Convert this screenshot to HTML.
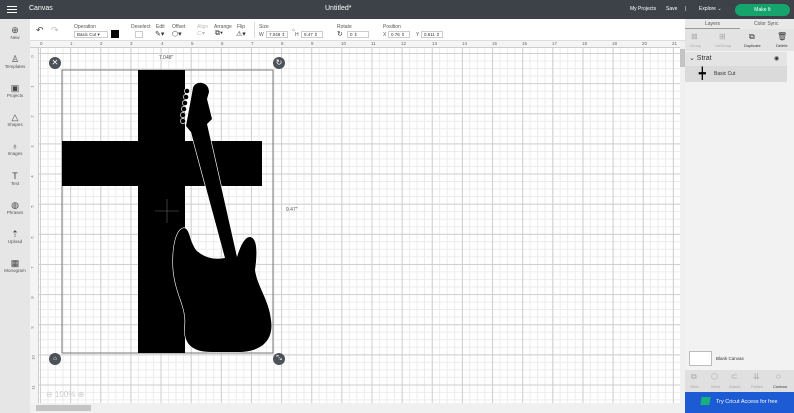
<!DOCTYPE html>
<html><head><style>
*{margin:0;padding:0;box-sizing:border-box}
body{width:794px;height:413px;overflow:hidden;font-family:"Liberation Sans",sans-serif;background:#fff;position:relative;color:#333}
.a{position:absolute}
.top{left:0;top:0;width:794px;height:19px;background:#3d4248;color:#fff}
.tb{left:30px;top:19px;width:655px;height:22px;background:#fff;border-bottom:1px solid #ddd}
.lbl{font-size:5px;color:#555}
.side{left:0;top:19px;width:30px;height:394px;background:#e6e6e6}
.si{position:absolute;left:0;width:30px;text-align:center;font-size:4.5px;color:#555}
.si b{display:block;font-size:9px;font-weight:normal;color:#444;line-height:10px}
.canvas{left:39px;top:48px;width:641px;height:355px;background-color:#fff;
background-image:linear-gradient(to right,#cfcfcf 1px,transparent 1px),linear-gradient(to bottom,#cfcfcf 1px,transparent 1px),linear-gradient(to right,#ebebeb 1px,transparent 1px),linear-gradient(to bottom,#ebebeb 1px,transparent 1px);
background-size:30.15px 30.15px,30.15px 30.15px,7.54px 7.54px,7.54px 7.54px;background-position:1px 5px,1px 5px,1px 5px,1px 5px}
.rt{left:30px;top:41px;width:650px;height:7px;background:#f4f4f4;border-bottom:1px solid #ccc;font-size:4.5px;color:#666}
.rl{left:30px;top:48px;width:9px;height:355px;background:#f4f4f4;border-right:1px solid #ccc;font-size:4px;color:#666}
.rl span{position:absolute;left:1px;transform:rotate(-90deg)}
.btn{width:12px;height:12px;border-radius:50%;background:#4d5258;color:#fff;font-size:8px;text-align:center;line-height:12px}
.rp{left:685px;top:19px;width:109px;height:394px;background:#f2f2f2}
.inp{position:absolute;height:7px;border:1px solid #ccc;font-size:4.5px;line-height:5px;padding-left:2px;background:#fff}
</style></head><body>
<div class="a top">
 <div class="a" style="left:7px;top:6px;width:10px;height:1px;background:#fff;box-shadow:0 3px #fff,0 6px #fff"></div>
 <div class="a" style="left:29px;top:5px;font-size:7px">Canvas</div>
 <div class="a" style="left:325px;top:5px;font-size:7px">Untitled*</div>
 <div class="a" style="left:630px;top:6px;font-size:5px">My Projects</div>
 <div class="a" style="left:666px;top:6px;font-size:5px">Save</div>
 <div class="a" style="left:685px;top:6px;font-size:5px">|</div>
 <div class="a" style="left:699px;top:6px;font-size:5px">Explore ⌄</div>
 <div class="a" style="left:735px;top:4px;width:55px;height:12px;border-radius:6px;background:#14a46c;font-size:5px;text-align:center;line-height:12px">Make It</div>
</div>
<div class="a side">
 <div class="si" style="top:6px"><b>⊕</b>New</div>
 <div class="si" style="top:35px"><b>♙</b>Templates</div>
 <div class="si" style="top:64px"><b>▣</b>Projects</div>
 <div class="si" style="top:93px"><b>△</b>Shapes</div>
 <div class="si" style="top:122px"><b>♁</b>Images</div>
 <div class="si" style="top:152px"><b>T</b>Text</div>
 <div class="si" style="top:181px"><b>◍</b>Phrases</div>
 <div class="si" style="top:210px"><b>⇡</b>Upload</div>
 <div class="si" style="top:239px"><b>▦</b>Monogram</div>
</div>
<div class="a tb">
 <div class="a" style="left:6px;top:6px;font-size:9px;color:#444">↶</div>
 <div class="a" style="left:21px;top:6px;font-size:9px;color:#bbb">↷</div>
 <div class="a lbl" style="left:44px;top:5px">Operation</div>
 <div class="inp" style="left:44px;top:12px;width:34px">Basic Cut ▾</div>
 <div class="a" style="left:81px;top:11px;width:8px;height:8px;background:#000"></div>
 <div class="a lbl" style="left:101px;top:5px">Deselect</div>
 <div class="inp" style="left:105px;top:12px;width:8px"></div>
 <div class="a lbl" style="left:126px;top:5px">Edit</div>
 <div class="a" style="left:125px;top:11px;font-size:7px">✎▾</div>
 <div class="a lbl" style="left:142px;top:5px">Offset</div>
 <div class="a" style="left:142px;top:11px;font-size:7px">⬡▾</div>
 <div class="a lbl" style="left:167px;top:5px;color:#bbb">Align</div>
 <div class="a" style="left:167px;top:11px;font-size:6px;color:#bbb">⊏▾</div>
 <div class="a lbl" style="left:184px;top:5px">Arrange</div>
 <div class="a" style="left:185px;top:11px;font-size:7px">⧉▾</div>
 <div class="a lbl" style="left:207px;top:5px">Flip</div>
 <div class="a" style="left:206px;top:11px;font-size:7px">⚠▾</div>
 <div class="a" style="left:224px;top:3px;width:1px;height:16px;background:#ddd"></div>
 <div class="a lbl" style="left:229px;top:5px">Size</div>
 <div class="a lbl" style="left:229px;top:13px">W</div>
 <div class="inp" style="left:236px;top:12px;width:22px">7.048 ⇕</div>
 <div class="a lbl" style="left:262px;top:8px">⌂</div>
 <div class="a lbl" style="left:265px;top:13px">H</div>
 <div class="inp" style="left:271px;top:12px;width:22px">9.47 ⇕</div>
 <div class="a lbl" style="left:307px;top:5px">Rotate</div>
 <div class="a" style="left:307px;top:11px;font-size:7px">↻</div>
 <div class="inp" style="left:317px;top:12px;width:22px">0 ⇕</div>
 <div class="a lbl" style="left:353px;top:5px">Position</div>
 <div class="a lbl" style="left:353px;top:13px">X</div>
 <div class="inp" style="left:358px;top:12px;width:22px">0.76 ⇕</div>
 <div class="a lbl" style="left:386px;top:13px">Y</div>
 <div class="inp" style="left:391px;top:12px;width:22px">0.611 ⇕</div>
</div>
<div class="a canvas"></div>
<div class="a rt">
 <span class="a" style="left:10px">0</span><span class="a" style="left:40px">1</span><span class="a" style="left:70px">2</span><span class="a" style="left:100px">3</span><span class="a" style="left:131px">4</span><span class="a" style="left:161px">5</span><span class="a" style="left:191px">6</span><span class="a" style="left:221px">7</span><span class="a" style="left:251px">8</span><span class="a" style="left:281px">9</span><span class="a" style="left:311px">10</span><span class="a" style="left:341px">11</span><span class="a" style="left:371px">12</span><span class="a" style="left:402px">13</span><span class="a" style="left:432px">14</span><span class="a" style="left:462px">15</span><span class="a" style="left:492px">16</span><span class="a" style="left:522px">17</span><span class="a" style="left:552px">18</span><span class="a" style="left:582px">19</span><span class="a" style="left:612px">20</span><span class="a" style="left:642px">21</span>
</div>
<div class="a rl">
 <span style="top:6px">0</span><span style="top:36px">1</span><span style="top:66px">2</span><span style="top:96px">3</span><span style="top:126px">4</span><span style="top:156px">5</span><span style="top:187px">6</span><span style="top:217px">7</span><span style="top:247px">8</span><span style="top:277px">9</span><span style="top:307px">10</span><span style="top:337px">11</span>
</div>
<div class="a" style="left:680px;top:41px;width:5px;height:362px;background:#f0f0f0"><div class="a" style="left:0;top:8px;width:5px;height:18px;background:#c4c4c4"></div></div>
<div class="a" style="left:30px;top:403px;width:655px;height:10px;background:#f0f0f0"><div class="a" style="left:6px;top:2px;width:55px;height:6px;background:#c4c4c4"></div></div>
<div class="a" style="left:46px;top:390px;font-size:8px;color:#ccc">⊖ 100% ⊕</div>
<div class="a" style="left:159px;top:55px;font-size:5px;color:#555">7.048"</div>
<div class="a" style="left:286px;top:207px;font-size:5px;color:#555">9.47"</div>
<svg class="a" style="left:0;top:0" width="794" height="413">
 <rect x="62" y="70" width="211" height="283" fill="none" stroke="#777" stroke-width="1"/>
 <rect x="138" y="70" width="47" height="283" fill="#000"/>
 <rect x="62" y="141" width="200" height="45" fill="#000"/>
 <path d="M155,211h24M167,199v24" stroke="#666" stroke-width=".6"/>
 <g fill="#000" stroke="#fff" stroke-width="1.3" paint-order="stroke">
 <path d="M193,88 C195,80 209,81 209,92 L207,99 L212,119 L207,124 L237,257 C240,248 244,237 250,237 C258,238 257,256 255,270 C257,286 269,300 271,320 C274,340 262,352 238,352 L212,352 C190,352 183,342 185,325 C187,305 173,292 173,262 C173,243 177,229 184,228 C190,229 189,240 196,250 C204,258 215,260 225,258 L191,132 L186,126 Z"/>
 <circle cx="187" cy="91" r="2.3"/><circle cx="186" cy="97" r="2.3"/><circle cx="185" cy="103" r="2.3"/><circle cx="184" cy="109" r="2.3"/><circle cx="183" cy="115" r="2.3"/><circle cx="183" cy="121" r="2.3"/>
 </g>
</svg>
<div class="a btn" style="left:49px;top:57px">✕</div>
<div class="a btn" style="left:273px;top:57px">↻</div>
<div class="a btn" style="left:49px;top:353px;font-size:6px">⌂</div>
<div class="a btn" style="left:273px;top:353px;font-size:7px">⤡</div>
<div class="a rp">
 <div class="a" style="left:0;top:0;width:109px;height:10px;background:#e9e9e9;font-size:5px;color:#555">
  <span class="a" style="left:20px;top:2px">Layers</span><span class="a" style="left:69px;top:2px">Color Sync</span>
  <div class="a" style="left:0;top:9px;width:55px;height:1px;background:#999"></div></div>
 <div class="a" style="left:0;top:10px;width:109px;height:22px;background:#e3e3e3;font-size:4px;color:#aaa">
  <span class="a" style="left:6px;top:3px;font-size:8px">⊠</span><span class="a" style="left:5px;top:14px">Group</span>
  <span class="a" style="left:34px;top:3px;font-size:8px">⊞</span><span class="a" style="left:30px;top:14px">UnGroup</span>
  <span class="a" style="left:64px;top:3px;font-size:8px;color:#333">⧉</span><span class="a" style="left:59px;top:14px;color:#333">Duplicate</span>
  <span class="a" style="left:92px;top:3px;font-size:8px;color:#333">🗑</span><span class="a" style="left:91px;top:14px;color:#333">Delete</span></div>
 <div class="a" style="left:0;top:33px;width:102px;height:30px;background:#e4e4e4">
  <span class="a" style="left:4px;top:2px;font-size:7px">⌄ Strat</span><span class="a" style="left:89px;top:3px;font-size:6px">◉</span>
  <div class="a" style="left:0;top:14px;width:102px;height:16px;background:#dadada"></div>
  <span class="a" style="left:14px;top:15px;font-size:11px;font-weight:bold;color:#000">┿</span>
  <span class="a" style="left:29px;top:19px;font-size:5px">Basic Cut</span></div>
 <div class="a" style="left:4px;top:332px;width:23px;height:15px;background:#fff;border:1px solid #bbb"></div>
 <span class="a" style="left:31px;top:337px;font-size:4.5px">Blank Canvas</span>
 <div class="a" style="left:0;top:351px;width:109px;height:22px;background:#e0e0e0;font-size:4px;color:#aaa">
  <span class="a" style="left:6px;top:2px;font-size:8px">⧉</span><span class="a" style="left:5px;top:14px">Slice</span>
  <span class="a" style="left:26px;top:2px;font-size:8px">⬡</span><span class="a" style="left:26px;top:14px">Weld</span>
  <span class="a" style="left:46px;top:2px;font-size:8px">⊂</span><span class="a" style="left:44px;top:14px">Attach</span>
  <span class="a" style="left:68px;top:2px;font-size:8px">⇊</span><span class="a" style="left:66px;top:14px">Flatten</span>
  <span class="a" style="left:91px;top:2px;font-size:8px;color:#333">◌</span><span class="a" style="left:88px;top:14px;color:#333">Contour</span></div>
 <div class="a" style="left:0;top:373px;width:109px;height:21px;background:#1c5bd4;color:#fff;font-size:5.5px">
  <span class="a" style="left:16px;top:5px;width:9px;height:8px;background:#17b27b;transform:skewX(-10deg)"></span>
  <span class="a" style="left:31px;top:7px">Try Cricut Access for free</span></div>
</div>
</body></html>
